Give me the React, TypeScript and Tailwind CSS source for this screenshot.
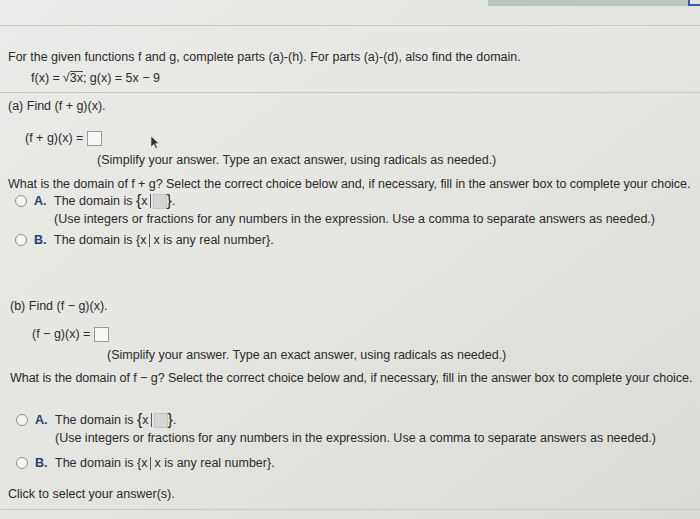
import React from "react";

const Radio = () => (
  <span className="inline-block w-[12px] h-[12px] rounded-full border-[1.5px] border-[#8f8f8f] bg-[#f4f4f2] shrink-0" />
);

const Box = () => (
  <span className="inline-block w-[15px] h-[15px] border border-[#9a9a9a] bg-[#f7f7f5] align-middle" />
);

const SetBox = () => (
  <span className="inline-flex items-center h-[16px]">
    <span className="text-[16px] leading-[14px] font-light">{"{"}</span>
    <span>x</span>
    <span className="inline-block w-[1px] h-[14px] bg-[#555] mx-[2px]" />
    <span className="inline-block w-[14px] h-[15px] bg-[#d6d6d4] border border-[#c4c4c2]" />
    <span className="text-[16px] leading-[14px] font-light">{"}"}</span>
    <span>.</span>
  </span>
);

const Choices = ({ dx, top, bGap }: { dx: number; top: number; bGap: number }) => (
  <div style={{ paddingLeft: dx, marginTop: top }}>
    <div className="flex items-center h-[16px]">
      <Radio />
      <span className="ml-[7px] font-bold text-[#2f3d6b] w-[20px]">A.</span>
      <span className="flex items-center">
        The domain is&nbsp;<SetBox />
      </span>
    </div>
    <div className="h-[16px] mt-[2px] pl-[39px]">
      (Use integers or fractions for any numbers in the expression. Use a comma to separate answers as needed.)
    </div>
    <div className="flex items-center h-[16px]" style={{ marginTop: bGap }}>
      <Radio />
      <span className="ml-[7px] font-bold text-[#2f3d6b] w-[20px]">B.</span>
      <span className="flex items-center">
        The domain is {"{"}x<span className="inline-block w-[1px] h-[13px] bg-[#555] mx-[3px]" />x is any real number{"}"}.
      </span>
    </div>
  </div>
);

export default function App() {
  return (
    <div
      className="w-[700px] h-[519px] overflow-hidden bg-linear-to-br from-[#ebebe9] via-[#e4e4e1] to-[#dadad6] text-[#2b2b2b] text-[12.5px] leading-[16px]"
      style={{ fontFamily: '"Liberation Sans", Arial, sans-serif' }}
    >
      <div className="flex justify-end h-[6px]">
        <div className="w-[200px] h-[6px] bg-[#b9c6c0]" />
        <div className="w-[12px] h-[6px] border-l-2 border-b-2 border-[#3a5ab0]" />
      </div>
      <div className="h-[1px] bg-[#c9c9c6] mt-[19px]" />

      <div className="pl-[8px] mt-[23px] h-[16px]">
        For the given functions f and g, complete parts (a)-(h). For parts (a)-(d), also find the domain.
      </div>
      <div className="pl-[31px] mt-[5px] h-[16px] flex items-center">
        f(x) = <span className="ml-[3px]">√</span>
        <span className="border-t border-[#444] leading-[13px]">3x</span>; g(x) = 5x − 9
      </div>
      <div className="h-[1px] bg-[#c9c9c6] mt-[6px]" />

      <div className="pl-[8px] mt-[5px] h-[16px]">(a) Find (f + g)(x).</div>
      <div className="pl-[25px] mt-[16px] h-[16px] flex items-center relative">
        (f + g)(x) =&nbsp;<Box />
        <svg className="absolute left-[150px] top-[5px]" width="10" height="14" viewBox="0 0 10 14">
          <path d="M1 1 L1 12 L3.8 9.4 L5.8 13.4 L7.4 12.6 L5.5 8.7 L9 8.5 Z" fill="#333" stroke="#eee" strokeWidth="0.6" />
        </svg>
      </div>
      <div className="pl-[97px] mt-[6px] h-[16px]">
        (Simplify your answer. Type an exact answer, using radicals as needed.)
      </div>
      <div className="pl-[8px] mt-[8px] h-[16px] tracking-[-0.05px]">
        What is the domain of f + g? Select the correct choice below and, if necessary, fill in the answer box to complete your choice.
      </div>
      <Choices dx={15} top={1} bGap={5} />

      <div className="pl-[10px] mt-[50px] h-[16px]">(b) Find (f − g)(x).</div>
      <div className="pl-[32px] mt-[12px] h-[16px] flex items-center">
        (f − g)(x) =&nbsp;<Box />
      </div>
      <div className="pl-[107px] mt-[5px] h-[16px]">
        (Simplify your answer. Type an exact answer, using radicals as needed.)
      </div>
      <div className="pl-[10px] mt-[7px] h-[16px] tracking-[-0.05px]">
        What is the domain of f − g? Select the correct choice below and, if necessary, fill in the answer box to complete your choice.
      </div>
      <Choices dx={16} top={26} bGap={9} />

      <div className="pl-[8px] mt-[15px] h-[16px]">Click to select your answer(s).</div>
      <div className="h-[1px] bg-[#c9c9c6] mt-[7px]" />
    </div>
  );
}
